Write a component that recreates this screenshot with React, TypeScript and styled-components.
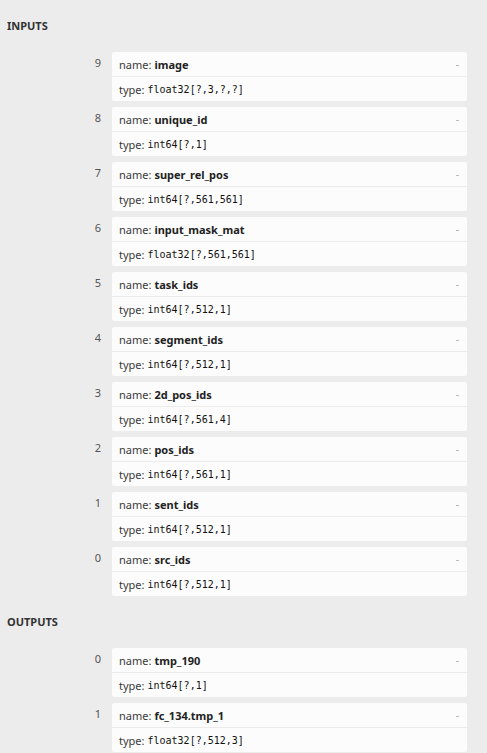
import React from 'react';
import styled, { createGlobalStyle } from 'styled-components';

const GlobalStyle = createGlobalStyle`
  html, body {
    margin: 0;
    padding: 0;
    background: #ececec;
  }
  body {
    font-family: "Noto Sans", "Open Sans", sans-serif;
    color: #333;
  }
`;

const Sidebar = styled.div`
  display: flex;
  flex-direction: column;
  padding: 0 20px 0 0;
`;

const Section = styled.section`
  display: flex;
  flex-direction: column;
  padding-top: 20px;
`;

const Title = styled.div`
  padding-left: 7px;
  font-size: 11px;
  line-height: 11px;
  font-weight: bold;
  color: #333;
  text-transform: uppercase;
`;

const List = styled.div`
  display: flex;
  flex-direction: column;
  gap: 6px;
  margin-top: 21px;
`;

const Row = styled.div`
  display: grid;
  grid-template-columns: 101px 1fr;
  column-gap: 11px;
`;

const Index = styled.div`
  text-align: right;
  font-size: 11px;
  line-height: 22px;
  color: #555;
`;

const Card = styled.div`
  background: #fcfcfc;
  border-radius: 2px;
  display: flex;
  flex-direction: column;
`;

const Line = styled.div<{ $top?: boolean }>`
  display: flex;
  align-items: center;
  height: 24px;
  padding: 0 8px 0 7px;
  font-size: 11px;
  color: #3a3a3a;
  border-bottom: ${(p) => (p.$top ? '1px solid #ececec' : 'none')};
`;

const Label = styled.span`
  margin-right: 3px;
`;

const Name = styled.span`
  font-weight: bold;
  color: #222;
`;

const Code = styled.span`
  font-family: "DejaVu Sans Mono", "Liberation Mono", monospace;
  font-size: 10px;
  color: #111;
`;

const Toggle = styled.span`
  margin-left: auto;
  color: #aaa;
  font-size: 10px;
`;

type Arg = { id: number; name: string; type: string };

const inputs: Arg[] = [
  { id: 9, name: 'image', type: 'float32[?,3,?,?]' },
  { id: 8, name: 'unique_id', type: 'int64[?,1]' },
  { id: 7, name: 'super_rel_pos', type: 'int64[?,561,561]' },
  { id: 6, name: 'input_mask_mat', type: 'float32[?,561,561]' },
  { id: 5, name: 'task_ids', type: 'int64[?,512,1]' },
  { id: 4, name: 'segment_ids', type: 'int64[?,512,1]' },
  { id: 3, name: '2d_pos_ids', type: 'int64[?,561,4]' },
  { id: 2, name: 'pos_ids', type: 'int64[?,561,1]' },
  { id: 1, name: 'sent_ids', type: 'int64[?,512,1]' },
  { id: 0, name: 'src_ids', type: 'int64[?,512,1]' },
];

const outputs: Arg[] = [
  { id: 0, name: 'tmp_190', type: 'int64[?,1]' },
  { id: 1, name: 'fc_134.tmp_1', type: 'float32[?,512,3]' },
];

const ArgRow = ({ arg }: { arg: Arg }) => (
  <Row>
    <Index>{arg.id}</Index>
    <Card>
      <Line $top>
        <Label>name:</Label>
        <Name>{arg.name}</Name>
        <Toggle>-</Toggle>
      </Line>
      <Line>
        <Label>type:</Label>
        <Code>{arg.type}</Code>
      </Line>
    </Card>
  </Row>
);

const App: React.FC = () => {
  return (
    <>
      <GlobalStyle />
      <Sidebar>
        <Section>
          <Title>Inputs</Title>
          <List>
            {inputs.map((a) => (
              <ArgRow key={'i' + a.id} arg={a} />
            ))}
          </List>
        </Section>
        <Section>
          <Title>Outputs</Title>
          <List>
            {outputs.map((a) => (
              <ArgRow key={'o' + a.id} arg={a} />
            ))}
          </List>
        </Section>
      </Sidebar>
    </>
  );
};

export default App;
